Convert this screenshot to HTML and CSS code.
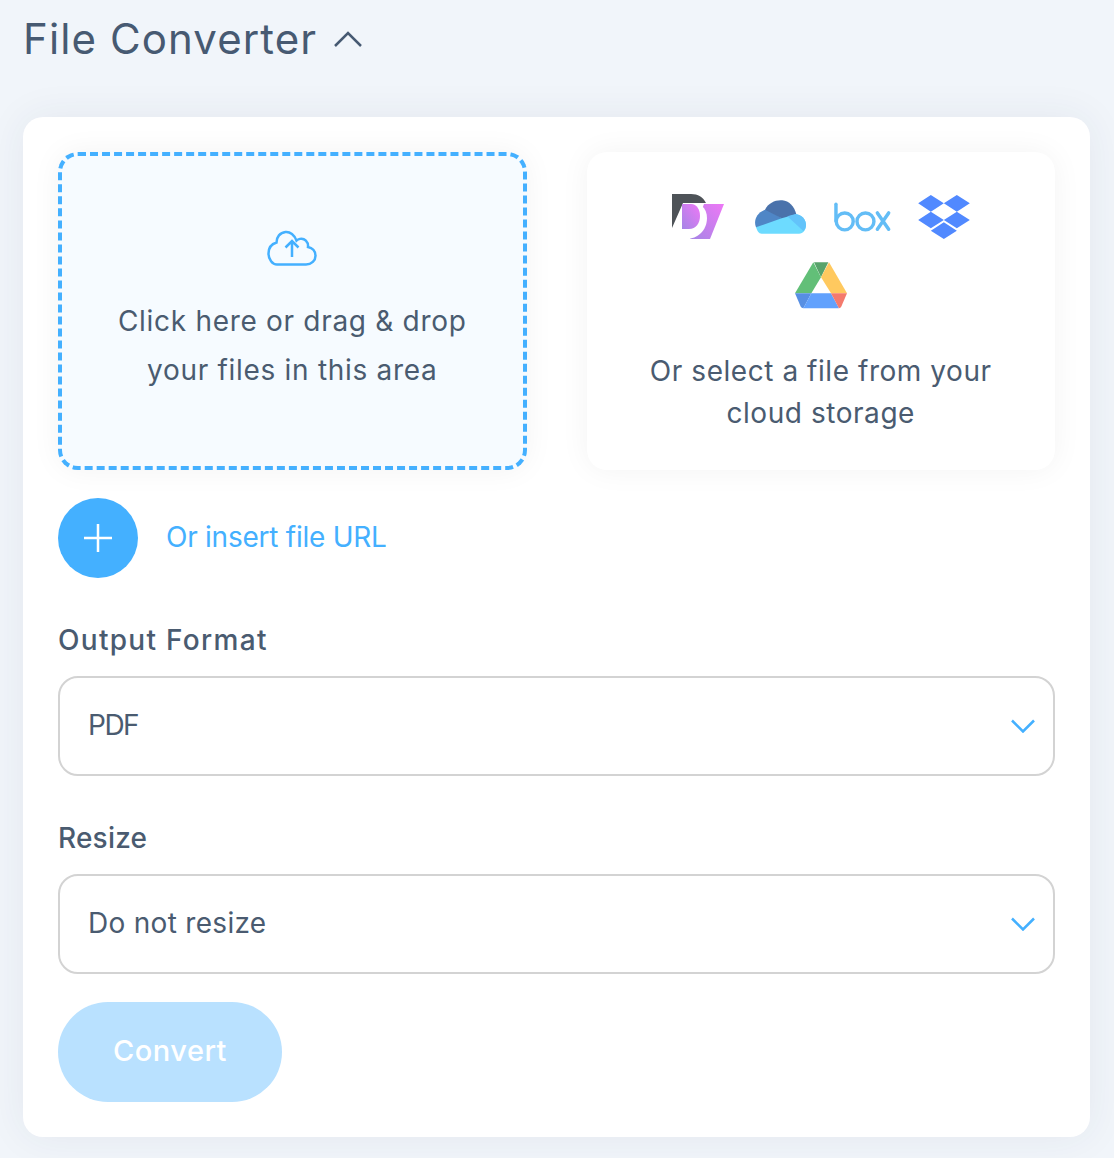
FILE: index.html
```html
<!DOCTYPE html>
<html lang="en">
<head>
    <meta charset="UTF-8">
    <meta name="viewport" content="width=device-width, initial-scale=1.0">
    <title>File Converter</title>
    <link rel="stylesheet" href="styles.css">
</head>
<body>
    <div class="heading">
        <h1>File Converter</h1>
        <svg class="heading-chevron" viewBox="0 0 28 16" width="28" height="16"><path d="M1 15 14 2l13 13" /></svg>
    </div>

    <div class="card">
        <div class="sources">
            <div class="dropzone">
                <svg class="cloud" viewBox="0 0 50 36" width="50" height="36">
                    <path d="M10 34.500h29c5.500 0 9.500-4 9.500-8.800 0-4.500-3.200-8-7.500-8.800.5-5-3.500-9-8-8-1.500.3-2.500.8-3.500 1.700C27.500 5 23 1.500 18.500 2 13 2.500 9.500 7 9.500 12.500 4.500 14 1.500 18 1.500 23.500c0 6 4 11 8.500 11z" />
                    <path d="M25 27V11M18.500 17.500 25 11l6.500 6.500" />
                </svg>
                <p>Click here or drag &amp; drop<br>your files in this area</p>
            </div>
            <div class="cloud-box">
                <div class="providers">
                    <svg class="dy-logo" viewBox="0 0 52 46" width="52" height="46">
                        <defs>
                            <linearGradient id="dyGrad" x1="1" y1="0" x2="0" y2="1">
                                <stop offset="0" stop-color="#ee78f6" />
                                <stop offset="1" stop-color="#a585e6" />
                            </linearGradient>
                        </defs>
                        <path d="M32 10h20L38 45H18z" fill="url(#dyGrad)" />
                        <path d="M8 8h10c10 0 17 6 17 16 0 12-9 21-21 21H8z" fill="#fff" />
                        <path d="M0 0h19c7 0 12 3 15 9H11L0 34z" fill="#4e5358" />
                        <path d="M10 10h9c6 0 9 6 9 12 0 7-4 13-11 13h-7z" fill="url(#dyGrad)" />
                    </svg>
                    <svg viewBox="312 58 156 100" width="52" height="34">
                        <path d="M335 158h112c12 0 21-11 21-26 0-16-12-29-30-32l-60 6-60 32c3 11 8 20 17 20z" fill="#6ddbff" />
                        <path d="M318 139c-10-24 8-52 37-54l40 27z" fill="#4f86c6" />
                        <path d="M345 86c10-20 32-30 52-28 20 2 36 18 42 42l-44 12z" fill="#4a72ab" />
                        <path d="M437 99c18 2 31 16 31 33 0 8-3 14-8 18l-48-44z" fill="#63c3fa" />
                    </svg>
                    <svg class="box-logo" viewBox="540 60 190 102" width="60" height="32">
                        <path d="M552 70v54" />
                        <circle cx="580" cy="125" r="27" />
                        <circle cx="646" cy="125" r="27" />
                        <path d="M684 98l36 52M720 98l-36 52" />
                    </svg>
                    <svg viewBox="805 45 155 132" width="52" height="44">
                        <path d="M843 45l39 25-39 25-38-25zM921 45l39 25-39 25-39-25zM843 95l39 25-39 25-38-25zM921 95l39 25-39 25-39-25zM882 127l39 25-39 25-39-25z" fill="#5189ff" />
                    </svg>
                    <svg viewBox="435 245 156 140" width="52" height="47">
                        <path d="M492 245h43l-22 45z" fill="#58a36b" />
                        <path d="M490 245l23 45-29 48h-49z" fill="#62bf78" />
                        <path d="M537 245l54 93h-48l-30-48z" fill="#ffc95f" />
                        <path d="M435 338h49l-24 45c-3 0-6-2-8-5z" fill="#578fe3" />
                        <path d="M484 338h59l24 45H460z" fill="#61a1fd" />
                        <path d="M543 338h48l-17 40c-2 3-4 5-7 5z" fill="#f47a6d" />
                    </svg>
                </div>
                <p>Or select a file from your<br>cloud storage</p>
            </div>
        </div>

        <div class="url-row">
            <span class="plus">
                <svg viewBox="0 0 28 28" width="28" height="28"><path d="M14 0v28M0 14h28" /></svg>
            </span>
            <span class="url-text">Or insert file URL</span>
        </div>

        <label class="field-label output-label">Output Format</label>
        <div class="select">
            <span class="pdf-value">PDF</span>
            <svg viewBox="0 0 24 14" width="24" height="14"><path d="M1 1.500l11 11 11-11" /></svg>
        </div>

        <label class="field-label">Resize</label>
        <div class="select">
            <span>Do not resize</span>
            <svg viewBox="0 0 24 14" width="24" height="14"><path d="M1 1.500l11 11 11-11" /></svg>
        </div>

        <button class="convert">Convert</button>
    </div>
</body>
</html>
```

FILE: styles.css
```css
body {
    margin: 0;
    padding: 0 24px 21px 23px;
    background: #f1f5fa;
    color: #4a5b70;
    font-family: 'Inter', 'Open Sans', sans-serif;
}

.heading {
    display: flex;
    align-items: center;
    gap: 17px;
    height: 78px;
    margin-bottom: 39px;
}

.heading h1 {
    margin: 0;
    padding-bottom: 2px;
    font-size: 42px;
    font-weight: 400;
    letter-spacing: 1.1px;
    color: #475a72;
}

.heading-chevron path {
    fill: none;
    stroke: #475a72;
    stroke-width: 2.500;
}

.card {
    height: 950px;
    padding: 35px;
    background: #fff;
    border-radius: 20px;
    box-shadow: 0 0 40px rgba(40, 60, 90, 0.07);
}

.sources {
    display: grid;
    grid-template-columns: 1fr 1fr;
    gap: 60px;
    height: 318px;
}

.dropzone,
.cloud-box {
    box-sizing: border-box;
    text-align: center;
    border-radius: 20px;
    box-shadow: 0 0 30px rgba(0, 0, 0, 0.05);
}

.dropzone {
    padding-top: 74px;
    background: #f6fbff;
    border: 4px dashed #44b0ff;
}

.dropzone p {
    margin: 27px 0 0;
    font-size: 28px;
    line-height: 49px;
    letter-spacing: 0.7px;
}

.cloud path:first-child,
.cloud path:last-child {
    fill: none;
    stroke: #44b0ff;
    stroke-width: 2.500;
}

.cloud-box {
    padding: 42px 20px 0;
    background: #fff;
}

.cloud-box p {
    margin: 41px 0 0;
    font-size: 28px;
    line-height: 42px;
    letter-spacing: 0.55px;
}

.providers {
    display: flex;
    flex-wrap: wrap;
    justify-content: center;
    align-items: center;
    gap: 22px 26px;
    padding: 0 50px;
}

.dy-logo {
    margin-right: 4px;
}

.box-logo path,
.box-logo circle {
    fill: none;
    stroke: #63bdf6;
    stroke-width: 11;
    stroke-linecap: round;
}

.url-row {
    display: flex;
    align-items: center;
    gap: 28px;
    margin-top: 28px;
}

.plus {
    display: flex;
    align-items: center;
    justify-content: center;
    width: 80px;
    height: 80px;
    border-radius: 50%;
    background: #44b0ff;
}

.plus path {
    stroke: #fff;
    stroke-width: 2.500;
}

.url-text {
    padding-bottom: 2px;
    font-size: 28px;
    letter-spacing: -0.25px;
    color: #44b0ff;
}

.field-label {
    display: block;
    margin: 43px 0 17px;
    font-size: 28px;
    font-weight: 500;
    line-height: 38px;
    letter-spacing: 0.2px;
}

.output-label {
    letter-spacing: 1.3px;
}

.select {
    box-sizing: border-box;
    display: flex;
    align-items: center;
    justify-content: space-between;
    height: 100px;
    padding: 0 18px 0 28px;
    font-size: 28px;
    letter-spacing: 0.3px;
    border: 2px solid #d3d3d3;
    border-radius: 20px;
}

.select span {
    padding-bottom: 2px;
}

.pdf-value {
    letter-spacing: -1.5px;
}

.select path {
    fill: none;
    stroke: #44b0ff;
    stroke-width: 2.500;
}

.convert {
    display: block;
    width: 224px;
    height: 100px;
    margin-top: 28px;
    padding-bottom: 4px;
    border: 0;
    border-radius: 50px;
    background: #b9e1ff;
    color: #fff;
    font-family: inherit;
    font-size: 29px;
    font-weight: 500;
    letter-spacing: 0.5px;
}
```
